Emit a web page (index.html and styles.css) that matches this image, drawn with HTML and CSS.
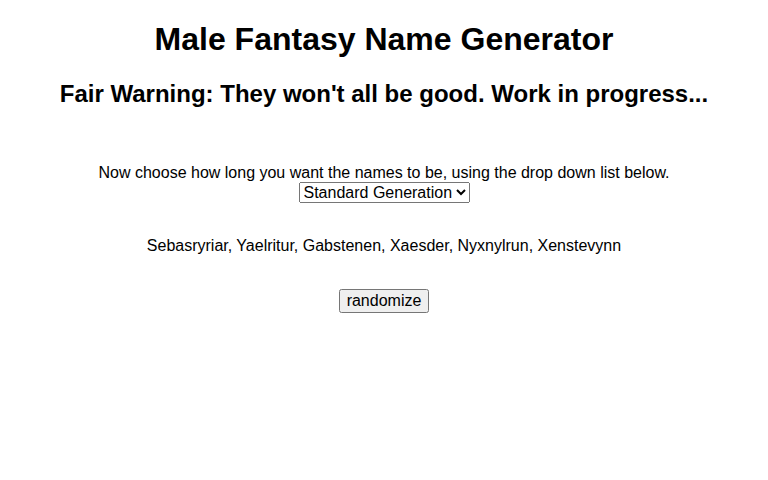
FILE: index.html
```html
<!DOCTYPE html>
<html>
<head>
<meta charset="utf-8">
<title>Male Fantasy Name Generator</title>
<link rel="stylesheet" href="styles.css">
</head>
<body class="page">
<h1 class="title">Male Fantasy Name Generator</h1>
<h2 class="subtitle">Fair Warning: They won't all be good. Work in progress...</h2>
<br>
<p class="chooser">Now choose how long you want the names to be, using the drop down list below.<br>
<select class="length">
<option>Standard Generation</option>
<option>Short Names</option>
<option>Long Names</option>
</select></p>
<p class="names">Sebasryriar, Yaelritur, Gabstenen, Xaesder, Nyxnylrun, Xenstevynn</p>
<br>
<button class="randomize">randomize</button>
</body>
</html>
```
FILE: styles.css
```css
.page {
  margin: 0 8px 8px;
  font-family: "Liberation Sans", Arial, sans-serif;
  font-size: 16px;
  text-align: center;
  color: #000;
  background: #fff;
}
.title {
  font-size: 32px;
  margin: 21.44px 0;
}
.subtitle {
  font-size: 24px;
  margin: 19.92px 0;
}
.chooser {
  margin: 18px 0 16px;
}
.names {
  margin: 34.5px 0 16px;
}
.length, .randomize {
  font-family: "Liberation Sans", Arial, sans-serif;
  font-size: 16px;
}
```
